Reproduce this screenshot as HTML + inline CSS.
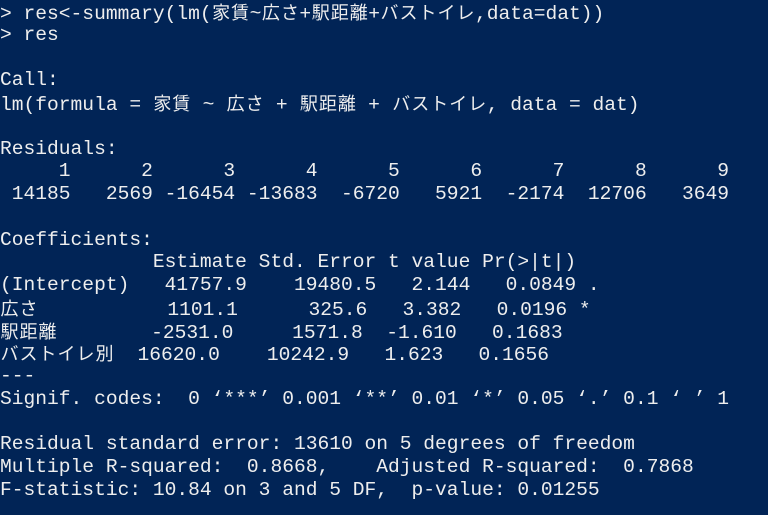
<!DOCTYPE html>
<html><head><meta charset="utf-8"><style>
html,body{margin:0;padding:0;background:#012456;width:768px;height:515px;overflow:hidden;position:relative}
div.l{position:absolute;left:0;height:23px;margin:0;font-family:"Liberation Mono","Noto Sans CJK JP",monospace;font-size:19.6px;line-height:23px;color:#eeeeee;white-space:pre}
.p{color:#e3a6e6}
.j{display:inline-block;width:19px;font-family:"Noto Sans CJK JP",sans-serif;font-size:18px;text-align:center}
</style></head><body>
<div class="l p" style="top:1px">&gt; res&lt;-summary(lm(<span class="j">家</span><span class="j">賃</span>~<span class="j">広</span><span class="j">さ</span>+<span class="j">駅</span><span class="j">距</span><span class="j">離</span>+<span class="j">バ</span><span class="j">ス</span><span class="j">ト</span><span class="j">イ</span><span class="j">レ</span>,data=dat))</div>
<div class="l p" style="top:24px">&gt; res</div>
<div class="l" style="top:69px">Call:</div>
<div class="l" style="top:92px">lm(formula = <span class="j">家</span><span class="j">賃</span> ~ <span class="j">広</span><span class="j">さ</span> + <span class="j">駅</span><span class="j">距</span><span class="j">離</span> + <span class="j">バ</span><span class="j">ス</span><span class="j">ト</span><span class="j">イ</span><span class="j">レ</span>, data = dat)</div>
<div class="l" style="top:138px">Residuals:</div>
<div class="l" style="top:160px">     1      2      3      4      5      6      7      8      9 </div>
<div class="l" style="top:183px"> 14185   2569 -16454 -13683  -6720   5921  -2174  12706   3649 </div>
<div class="l" style="top:229px">Coefficients:</div>
<div class="l" style="top:251px">             Estimate Std. Error t value Pr(&gt;|t|)  </div>
<div class="l" style="top:274px">(Intercept)   41757.9    19480.5   2.144   0.0849 .</div>
<div class="l" style="top:297px"><span class="j">広</span><span class="j">さ</span>           1101.1      325.6   3.382   0.0196 *</div>
<div class="l" style="top:320px"><span class="j">駅</span><span class="j">距</span><span class="j">離</span>        -2531.0     1571.8  -1.610   0.1683  </div>
<div class="l" style="top:342px"><span class="j">バ</span><span class="j">ス</span><span class="j">ト</span><span class="j">イ</span><span class="j">レ</span><span class="j">別</span>  16620.0    10242.9   1.623   0.1656  </div>
<div class="l" style="top:365px">---</div>
<div class="l" style="top:388px">Signif. codes:  0 ‘***’ 0.001 ‘**’ 0.01 ‘*’ 0.05 ‘.’ 0.1 ‘ ’ 1</div>
<div class="l" style="top:433px">Residual standard error: 13610 on 5 degrees of freedom</div>
<div class="l" style="top:456px">Multiple R-squared:  0.8668,    Adjusted R-squared:  0.7868 </div>
<div class="l" style="top:479px">F-statistic: 10.84 on 3 and 5 DF,  p-value: 0.01255</div>
</body></html>
